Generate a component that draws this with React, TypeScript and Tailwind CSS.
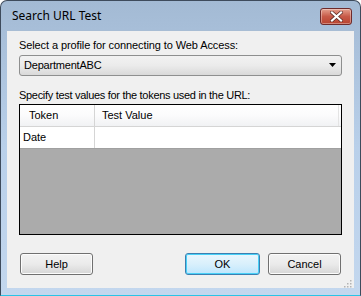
export default function App() {
  const ui = { fontFamily: '"Liberation Sans", Arial, sans-serif' };
  const title = { fontFamily: '"Noto Sans", "Open Sans", sans-serif' };

  return (
    <div className="w-[361px] h-[296px] bg-white">
      <div className="flex flex-col w-[361px] h-[296px] rounded-t-[7px] border border-[#3e4b5c] border-b-[#2ac4e6] bg-gradient-to-b from-[#a3bad4] via-[#b9d0ea] to-[#c3d7ee] overflow-hidden">
        {/* title bar */}
        <div className="flex items-center h-[29px] pl-[11px] pr-[8px] shrink-0">
          <span style={title} className="text-[12px] text-black leading-none mt-[1px] flex-1">
            Search URL Test
          </span>
          <div className="flex items-center justify-center w-[32px] h-[17px] mt-[2px] rounded-[3px] border border-[#6e2b2b] bg-gradient-to-b from-[#e4a08f] via-[#c75a48] to-[#b8432f] shadow-[inset_0_0_0_1px_rgba(255,255,255,0.35)]">
            <svg width="13" height="11" viewBox="0 0 13 11">
              <path
                d="M2 1.5 L11 9.5 M11 1.5 L2 9.5"
                stroke="#5a2a25"
                strokeWidth="3.6"
                strokeLinecap="square"
              />
              <path
                d="M2 1.5 L11 9.5 M11 1.5 L2 9.5"
                stroke="#ffffff"
                strokeWidth="2.2"
                strokeLinecap="square"
              />
            </svg>
          </div>
        </div>

        {/* client area */}
        <div
          style={ui}
          className="flex flex-col mx-[6px] h-[258px] bg-[#f0f0f0] border-t border-[#a8bdd4] pl-[12px] pr-[12px] pt-[8px] text-[11px] text-black"
        >
          <div className="h-[13px] leading-[13px] tracking-[-0.1px]">Select a profile for connecting to Web Access:</div>
          <div className="flex items-center mt-[3px] h-[21px] rounded-[3px] border border-[#8e8f8f] bg-gradient-to-b from-[#f2f2f2] via-[#ebebeb] to-[#d9d9d9] pl-[4px] pr-[4px]">
            <span className="flex-1 leading-none tracking-[-0.2px]">DepartmentABC</span>
            <svg width="7" height="4" viewBox="0 0 7 4" className="mr-[1px]">
              <path d="M0 0 H7 L3.5 4 Z" fill="#000" />
            </svg>
          </div>

          <div className="h-[13px] leading-[13px] mt-[13px] tracking-[-0.3px]">Specify test values for the tokens used in the URL:</div>

          <div className="flex flex-col mt-[2px] h-[132px] border border-black bg-[#ababab]">
            <div className="flex h-[22px] bg-gradient-to-b from-[#ffffff] via-[#fbfbfc] to-[#f1f2f4] border-b border-[#d5d5d5]">
              <div className="flex items-center w-[75px] pl-[9px] border-r border-[#d5d5d5]">Token</div>
              <div className="flex items-center flex-1 pl-[7px] border-r border-[#e4e4e4] mr-[2px]">Test Value</div>
            </div>
            <div className="flex h-[22px] bg-white border-b border-[#a0a0a0]">
              <div className="flex items-center w-[75px] pl-[3px] border-r border-[#d5d5d5]">Date</div>
              <div className="flex-1" />
            </div>
          </div>

          <div className="flex mt-[18px]">
            <button className="w-[73px] h-[22px] rounded-[3px] border border-[#707070] bg-gradient-to-b from-[#f2f2f2] via-[#ebebeb] to-[#d6d6d6] shadow-[inset_0_0_0_1px_#fcfcfc] ml-[1px]">
              Help
            </button>
            <div className="flex-1" />
            <button className="w-[75px] h-[22px] rounded-[3px] border border-[#3c7fb1] bg-gradient-to-b from-[#eaf6fd] via-[#d9f0fc] to-[#bee6fd] shadow-[inset_0_0_0_1px_#48d0f7]">
              OK
            </button>
            <button className="w-[73px] h-[22px] ml-[8px] mr-[1px] rounded-[3px] border border-[#707070] bg-gradient-to-b from-[#f2f2f2] via-[#ebebeb] to-[#d6d6d6] shadow-[inset_0_0_0_1px_#fcfcfc]">
              Cancel
            </button>
          </div>
          <div className="flex justify-end mt-[4px] mr-[-10px]">
            <svg width="9" height="9" viewBox="0 0 9 9">
              {[
                [7, 1],
                [4, 4],
                [7, 4],
                [1, 7],
                [4, 7],
                [7, 7],
              ].map(([x, y], i) => (
                <rect key={i} x={x} y={y} width="1.5" height="1.5" fill="#b4b4b4" />
              ))}
            </svg>
          </div>
        </div>
      </div>
    </div>
  );
}
